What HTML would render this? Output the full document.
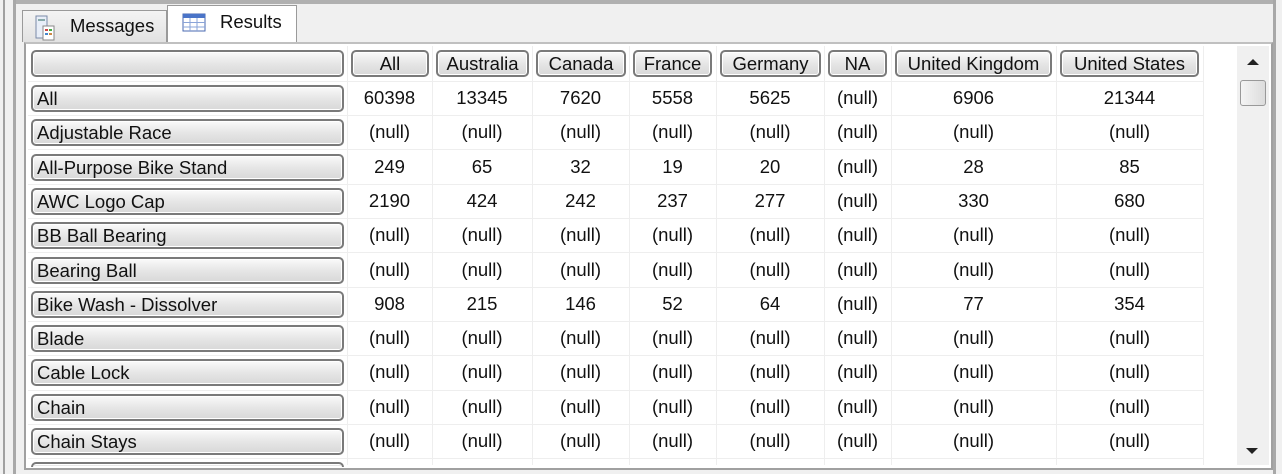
<!DOCTYPE html>
<html><head><style>
*{margin:0;padding:0;box-sizing:border-box}
body{width:1282px;height:474px;background:#fff;position:relative;overflow:hidden;font-family:"Liberation Sans",sans-serif;font-size:18.5px;color:#111;letter-spacing:0}
.abs{position:absolute}
.btn{position:absolute;border:2px solid #7a7a7a;border-radius:5px;background:linear-gradient(#fafafa,#e6e6e6 50%,#d8d8d8);box-shadow:inset 0 0 0 1px #fff;height:27px;line-height:24px;white-space:nowrap;overflow:hidden}
.hb{text-align:center}
.rb{left:31px;width:313px;padding-left:4px}
</style></head><body>
<div class="abs" style="left:0;top:0;width:1282px;height:474px;background:#f0f0f0"></div>
<div class="abs" style="left:3px;top:0;width:2px;height:474px;background:#a0a0a0"></div>
<div class="abs" style="left:13px;top:0;width:3px;height:474px;background:#a8a8a8"></div>
<div class="abs" style="left:16px;top:0;width:1258px;height:4px;background:#b0b0b0"></div>
<div class="abs" style="left:1273px;top:0;width:3px;height:474px;background:#a8a8a8"></div>
<div class="abs" style="left:22px;top:10px;width:145px;height:32px;background:linear-gradient(#f4f4f4,#e2e2e2);border:1px solid #9a9a9a;border-bottom:none"></div>
<svg class="abs" style="left:34px;top:15px" width="22" height="26" viewBox="0 0 22 26"><rect x="2" y="1" width="11" height="22" fill="#e8eef8" stroke="#7a8aa8"/><rect x="4" y="4" width="7" height="2" fill="#8aa"/><rect x="9" y="11" width="11" height="14" fill="#fff" stroke="#888"/><rect x="11" y="14" width="3" height="2" fill="#c44"/><rect x="15" y="14" width="3" height="2" fill="#4a4"/><rect x="11" y="18" width="3" height="2" fill="#48c"/><rect x="15" y="18" width="3" height="2" fill="#c84"/></svg>
<div class="abs" style="left:70px;top:14px;line-height:24px">Messages</div>
<div class="abs" style="left:167px;top:5px;width:130px;height:38px;background:#fff;border:1px solid #9a9a9a;border-bottom:none"></div>
<svg class="abs" style="left:182px;top:13px" width="24" height="20" viewBox="0 0 24 20"><rect x="1" y="1" width="22" height="17" fill="#fff" stroke="#4a6ab0"/><rect x="1" y="1" width="22" height="4" fill="#4a74c8"/><path d="M8 5V18M15 5V18M1 9.5H23M1 14H23" stroke="#8aa4d8"/></svg>
<div class="abs" style="left:220px;top:10px;line-height:24px">Results</div>
<div class="abs" style="left:24px;top:42px;width:1249px;height:428px;background:#fff;border:2px solid #a0a0a0;border-top:2px solid #c0c0c0"></div>
<div class="abs" style="left:1237px;top:46px;width:32px;height:419px;background:#f0f0f0"></div>
<div class="abs" style="left:1247px;top:59px;width:0;height:0;border-left:6px solid transparent;border-right:6px solid transparent;border-bottom:6px solid #222"></div>
<div class="abs" style="left:1240px;top:80px;width:26px;height:26px;border:1px solid #999;border-radius:3px;background:linear-gradient(90deg,#f4f4f4,#dcdcdc)"></div>
<div class="abs" style="left:1246px;top:448px;width:0;height:0;border-left:6px solid transparent;border-right:6px solid transparent;border-top:6px solid #222"></div>
<div class="abs" style="left:1203px;top:46px;width:1px;height:419px;background:#eee"></div>
<div class="btn" style="left:31px;top:50px;width:313px"></div>
<div class="btn hb" style="left:351px;top:50px;width:78px">All</div>
<div class="btn hb" style="left:436px;top:50px;width:93px">Australia</div>
<div class="btn hb" style="left:536px;top:50px;width:90px">Canada</div>
<div class="btn hb" style="left:633px;top:50px;width:79px">France</div>
<div class="btn hb" style="left:720px;top:50px;width:101px">Germany</div>
<div class="btn hb" style="left:828px;top:50px;width:59px">NA</div>
<div class="btn hb" style="left:895px;top:50px;width:157px">United Kingdom</div>
<div class="btn hb" style="left:1060px;top:50px;width:139px">United States</div>
<div class="abs" style="left:28px;top:81px;width:1176px;height:1px;background:#eee"></div>
<div class="abs" style="left:347px;top:46px;width:1px;height:419px;background:#eee"></div>
<div class="abs" style="left:432px;top:46px;width:1px;height:419px;background:#eee"></div>
<div class="abs" style="left:532px;top:46px;width:1px;height:419px;background:#eee"></div>
<div class="abs" style="left:629px;top:46px;width:1px;height:419px;background:#eee"></div>
<div class="abs" style="left:716px;top:46px;width:1px;height:419px;background:#eee"></div>
<div class="abs" style="left:824px;top:46px;width:1px;height:419px;background:#eee"></div>
<div class="abs" style="left:891px;top:46px;width:1px;height:419px;background:#eee"></div>
<div class="abs" style="left:1056px;top:46px;width:1px;height:419px;background:#eee"></div>

<style>
.r{position:absolute;left:0;width:1204px;height:34px}
.r>span{position:absolute;top:0;line-height:34px;text-align:center}
.r>.btn{top:4px}
.s1{left:347px;width:85px}.s2{left:432px;width:100px}.s3{left:532px;width:97px}.s4{left:629px;width:87px}.s5{left:716px;width:108px}.s6{left:824px;width:67px}.s7{left:891px;width:165px}.s8{left:1056px;width:147px}
.ln{position:absolute;left:28px;width:1176px;height:1px;background:#eee}
</style>
<div class="r" style="top:81px"><div class="btn rb">All</div><span class="s1">60398</span><span class="s2">13345</span><span class="s3">7620</span><span class="s4">5558</span><span class="s5">5625</span><span class="s6">(null)</span><span class="s7">6906</span><span class="s8">21344</span></div>
<div class="ln" style="top:115px"></div>
<div class="r" style="top:115.3px"><div class="btn rb">Adjustable Race</div><span class="s1">(null)</span><span class="s2">(null)</span><span class="s3">(null)</span><span class="s4">(null)</span><span class="s5">(null)</span><span class="s6">(null)</span><span class="s7">(null)</span><span class="s8">(null)</span></div>
<div class="ln" style="top:149px"></div>
<div class="r" style="top:149.6px"><div class="btn rb">All-Purpose Bike Stand</div><span class="s1">249</span><span class="s2">65</span><span class="s3">32</span><span class="s4">19</span><span class="s5">20</span><span class="s6">(null)</span><span class="s7">28</span><span class="s8">85</span></div>
<div class="ln" style="top:184px"></div>
<div class="r" style="top:183.9px"><div class="btn rb">AWC Logo Cap</div><span class="s1">2190</span><span class="s2">424</span><span class="s3">242</span><span class="s4">237</span><span class="s5">277</span><span class="s6">(null)</span><span class="s7">330</span><span class="s8">680</span></div>
<div class="ln" style="top:218px"></div>
<div class="r" style="top:218.2px"><div class="btn rb">BB Ball Bearing</div><span class="s1">(null)</span><span class="s2">(null)</span><span class="s3">(null)</span><span class="s4">(null)</span><span class="s5">(null)</span><span class="s6">(null)</span><span class="s7">(null)</span><span class="s8">(null)</span></div>
<div class="ln" style="top:252px"></div>
<div class="r" style="top:252.5px"><div class="btn rb">Bearing Ball</div><span class="s1">(null)</span><span class="s2">(null)</span><span class="s3">(null)</span><span class="s4">(null)</span><span class="s5">(null)</span><span class="s6">(null)</span><span class="s7">(null)</span><span class="s8">(null)</span></div>
<div class="ln" style="top:287px"></div>
<div class="r" style="top:286.8px"><div class="btn rb">Bike Wash - Dissolver</div><span class="s1">908</span><span class="s2">215</span><span class="s3">146</span><span class="s4">52</span><span class="s5">64</span><span class="s6">(null)</span><span class="s7">77</span><span class="s8">354</span></div>
<div class="ln" style="top:321px"></div>
<div class="r" style="top:321.1px"><div class="btn rb">Blade</div><span class="s1">(null)</span><span class="s2">(null)</span><span class="s3">(null)</span><span class="s4">(null)</span><span class="s5">(null)</span><span class="s6">(null)</span><span class="s7">(null)</span><span class="s8">(null)</span></div>
<div class="ln" style="top:355px"></div>
<div class="r" style="top:355.4px"><div class="btn rb">Cable Lock</div><span class="s1">(null)</span><span class="s2">(null)</span><span class="s3">(null)</span><span class="s4">(null)</span><span class="s5">(null)</span><span class="s6">(null)</span><span class="s7">(null)</span><span class="s8">(null)</span></div>
<div class="ln" style="top:390px"></div>
<div class="r" style="top:389.7px"><div class="btn rb">Chain</div><span class="s1">(null)</span><span class="s2">(null)</span><span class="s3">(null)</span><span class="s4">(null)</span><span class="s5">(null)</span><span class="s6">(null)</span><span class="s7">(null)</span><span class="s8">(null)</span></div>
<div class="ln" style="top:424px"></div>
<div class="r" style="top:424px"><div class="btn rb">Chain Stays</div><span class="s1">(null)</span><span class="s2">(null)</span><span class="s3">(null)</span><span class="s4">(null)</span><span class="s5">(null)</span><span class="s6">(null)</span><span class="s7">(null)</span><span class="s8">(null)</span></div>
<div class="ln" style="top:458px"></div>
<div class="btn rb" style="top:462px;height:5px;border-bottom:none;border-radius:5px 5px 0 0"></div>
</body></html>
